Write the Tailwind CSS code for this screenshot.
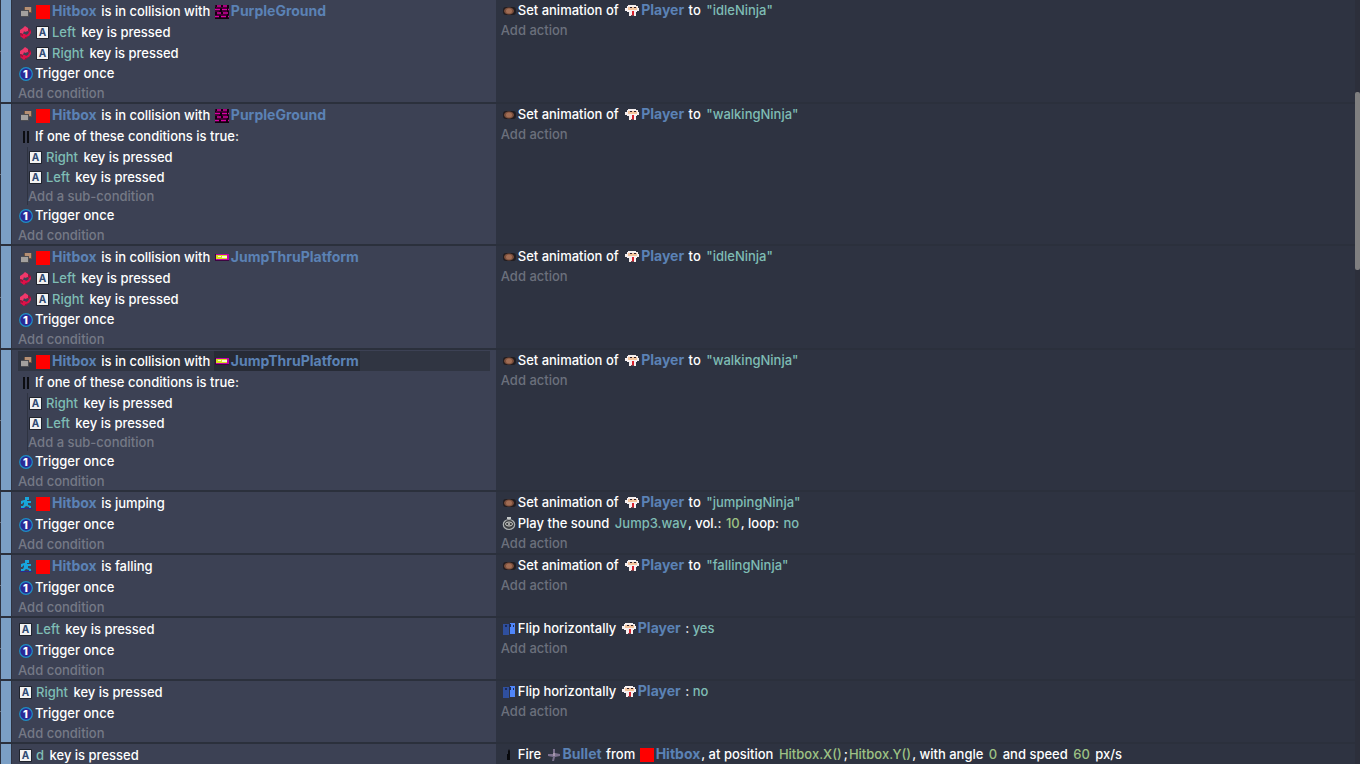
<!DOCTYPE html>
<html lang="en">

<head>
    <meta charset="UTF-8">
    <meta name="viewport" content="width=device-width, initial-scale=1.0">
    <script src="https://cdn.jsdelivr.net/npm/@tailwindcss/browser@4"></script>
    <title>Events</title>
</head>

<body class="h-screen overflow-hidden bg-[#2e3341] font-['Inter',sans-serif] text-[13px]/5 font-medium text-white">
    <!-- icons -->
    <svg class="hidden">
        <symbol id="collision" viewBox="0 0 16 16">
            <rect x="6" y="3" width="8" height="6" fill="#66503f" />
            <rect x="7" y="3" width="6" height="5" fill="#b58f74" />
            <rect x="3" y="6" width="8" height="7" fill="#4d4d52" />
            <rect x="3" y="7" width="7" height="5" fill="#a3a09e" />
        </symbol>
        <symbol id="invert" viewBox="0 0 16 16">
            <path d="M2 8V5l3-2 2-2 3 2v3L7 7 6 6 5 9z" fill="#f0386b" />
            <path d="M13 5v3l-2 3-3 1-2 2-4-3 2-2 3 0 1 1 2-1 1-2-1-1z" fill="#e01048" />
            <path d="m2 8 3 1v2l-3-1zM10 3l3 2-1 2-2-1zM7 12h3l-3 2z" fill="#a0103c" />
        </symbol>
        <symbol id="key" viewBox="0 0 16 16">
            <rect x="1" y="1" width="13" height="13" rx="1" fill="#20242e" />
            <rect x="2" y="2" width="11" height="11" fill="#f2f2f2" />
            <text x="7.5" y="11" text-anchor="middle" font-family="Inter" font-weight="700" font-size="10" fill="#2f4a72">A</text>
        </symbol>
        <symbol id="once" viewBox="0 0 16 16">
            <circle cx="8" cy="8" r="6.3" fill="#2a2a96" stroke="#1e8fc4" stroke-width="1.2" />
            <text x="7.5" y="12" text-anchor="middle" font-family="Inter" font-weight="800" font-size="11" fill="#fff">1</text>
        </symbol>
        <symbol id="or" viewBox="0 0 16 16">
            <rect x="5" y="2" width="2" height="12" fill="#0c0d11" />
            <rect x="9" y="2" width="2" height="12" fill="#0c0d11" />
        </symbol>
        <symbol id="runner" viewBox="0 0 16 16">
            <rect x="2" y="12" width="12" height="1" fill="#2c2a8c" />
            <path d="M7 1h4v3H9v1h4v2h-3v2l3 1v2h-2v-1l-3-1-2 2H3v-2h2l1-2V6L4 8H3V5l3-1h1z" fill="#18a5dc" />
        </symbol>
        <symbol id="square" viewBox="0 0 16 16">
            <rect x="1" y="1" width="14" height="14" fill="#f00" />
        </symbol>
        <symbol id="bricks" viewBox="0 0 16 16">
            <rect x="1" y="1" width="14" height="14" fill="#14000f" />
            <path d="M3 2h4M9 2h4M1 5.500h5M8 5.500h5M14 5.500h1M3 9h4M9 9h5M1 12.500h4M7 12.500h5M14 12.500h1" stroke="#dc00a6" stroke-width="1.500" />
            <path d="M1 2h1M2 3.700h11M1 7.200h4M8 7.200h5M3 10.800h10" stroke="#5c0045" stroke-width="1" />
        </symbol>
        <symbol id="platform" viewBox="0 0 16 16">
            <rect x="1" y="4" width="14" height="7" fill="#3c0640" />
            <rect x="2" y="4" width="13" height="6" fill="#c000a8" />
            <rect x="2" y="5" width="11" height="4" fill="#d2e21c" />
            <path d="M4 6h3v1H4zM8 6h5v2H8z" fill="#fff6d0" />
        </symbol>
        <symbol id="animation" viewBox="0 0 16 16">
            <rect x="2" y="4" width="13" height="8" rx="3" fill="#221d20" />
            <ellipse cx="8" cy="8" rx="5" ry="3.500" fill="#7b4f3c" />
            <ellipse cx="8" cy="8" rx="3" ry="2.500" fill="#a06d55" />
        </symbol>
        <symbol id="ninja" viewBox="0 0 16 16">
            <path d="M3 3h1V2h8v1h2v2h1v3h-2v1h-1v4H5V9H3V8H1V5h2z" fill="#f6f0f0" />
            <rect x="4" y="4" width="9" height="3" fill="#f3c49c" />
            <path d="M6 4h2v1H6zM10 4h2v1h-2z" fill="#30202a" />
            <path d="M8 8h2v4H8z" fill="#d8202c" />
            <path d="M7 12h3v1H7z" fill="#7c4148" />
        </symbol>
        <symbol id="sound" viewBox="0 0 16 16">
            <ellipse cx="8" cy="8.500" rx="5.700" ry="5" fill="#3e4144" stroke="#aeb2b2" stroke-width="1.2" />
            <ellipse cx="8" cy="8" rx="3.500" ry="2" fill="#3a3d40" stroke="#d0d0cc" />
            <circle cx="8" cy="8" r="1" fill="#c8c8c4" />
            <path d="M6 1h4v2H6z" fill="#c4c8c8" />
        </symbol>
        <symbol id="flip" viewBox="0 0 16 16">
            <path d="M2 3h6v11H2z" fill="#2f4f9e" />
            <path d="M9 2h5v11H9z" fill="#4f86fa" />
            <path d="M4 4h2v2H4zM8 3h2v3H8zM12 4h1v2h-1z" fill="#1b2a58" />
        </symbol>
        <symbol id="fire" viewBox="0 0 16 16">
            <path d="M8 2l1 2v9H6V7h1V4z" fill="#08090c" />
        </symbol>
        <symbol id="shuriken" viewBox="0 0 16 16">
            <path d="M7 2h2v4l5 1v2l-5 1-1 4H6l1-4-5-1V7h5z" fill="#7a708e" />
            <path d="M7 6h2v3H7z" fill="#a496ac" />
        </symbol>
    </svg>

    <div class="flex h-full">
        <main class="min-w-0 flex-1">
            <section class="flex gap-px border-b-2 border-[#2b303c]">
                <div class="flex w-[11px] items-center bg-[linear-gradient(to_right,#2e3341_1px,#7b9fc5_1px)]"><i class="h-px w-px bg-[#6f7684]"></i></div>
                <div class="w-[35.7%] bg-[#3c4154] px-1.5 pt-px">
                    <p class="mb-px flex h-5 items-center whitespace-pre"><svg class="mt-0.5 mr-px size-4"><use href="#collision" /></svg><svg class="mt-0.5 size-4"><use href="#square" /></svg><b class="mx-px text-sm font-bold text-[#5b82b5]">Hitbox</b> is in collision with <svg class="mt-0.5 size-4"><use href="#bricks" /></svg><b class="mx-px text-sm font-bold text-[#5b82b5]">PurpleGround</b></p>
                    <p class="mb-px flex h-5 items-center whitespace-pre"><svg class="mt-0.5 mr-px size-4"><use href="#invert" /></svg><svg class="mt-0.5 size-4"><use href="#key" /></svg><span class="ml-px mr-0.5 text-[#7fbdb5]">Left</span> key is pressed</p>
                    <p class="flex h-5 items-center whitespace-pre"><svg class="mt-0.5 mr-px size-4"><use href="#invert" /></svg><svg class="mt-0.5 size-4"><use href="#key" /></svg><span class="ml-px mr-0.5 text-[#7fbdb5]">Right</span> key is pressed</p>
                    <p class="mb-px flex h-5 items-center whitespace-pre"><svg class="mt-0.5 mr-px size-4"><use href="#once" /></svg>Trigger once</p>
                    <button class="flex h-[18px] items-center text-[#757986]">Add condition</button>
                </div>
                <div class="flex-1 pl-1">
                    <p class="mb-px flex h-5 items-center whitespace-pre"><svg class="mt-0.5 mr-px size-4"><use href="#animation" /></svg>Set animation of <svg class="mt-0.5 ml-0.5 size-4"><use href="#ninja" /></svg><b class="mx-px text-sm font-bold text-[#5b82b5]">Player</b> to <span class="mx-0.5 text-[#7fbdb5]">"idleNinja"</span></p>
                    <button class="flex h-[18px] items-center text-[#6b707c]">Add action</button>
                </div>
            </section>

            <section class="flex gap-px border-b-2 border-[#2b303c]">
                <div class="flex w-[11px] items-center bg-[linear-gradient(to_right,#2e3341_1px,#7b9fc5_1px)]"><i class="h-px w-px bg-[#6f7684]"></i></div>
                <div class="w-[35.7%] bg-[#3c4154] px-1.5 pt-px">
                    <p class="mb-px flex h-5 items-center whitespace-pre"><svg class="mt-0.5 mr-px size-4"><use href="#collision" /></svg><svg class="mt-0.5 size-4"><use href="#square" /></svg><b class="mx-px text-sm font-bold text-[#5b82b5]">Hitbox</b> is in collision with <svg class="mt-0.5 size-4"><use href="#bricks" /></svg><b class="mx-px text-sm font-bold text-[#5b82b5]">PurpleGround</b></p>
                    <p class="mb-px flex h-5 items-center whitespace-pre"><svg class="mt-0.5 mr-px size-4"><use href="#or" /></svg>If one of these conditions is true:</p>
                    <div class="ml-[9px] border-l border-[#2e3341]">
                        <p class="flex h-5 items-center whitespace-pre"><svg class="mt-0.5 size-4"><use href="#key" /></svg><span class="mx-0.5 text-[#7fbdb5]">Right</span> key is pressed</p>
                        <p class="flex h-5 items-center whitespace-pre"><svg class="mt-0.5 size-4"><use href="#key" /></svg><span class="mx-0.5 text-[#7fbdb5]">Left</span> key is pressed</p>
                        <button class="flex h-[18px] items-center text-[#757986]">Add a sub-condition</button>
                    </div>
                    <p class="mb-px flex h-5 items-center whitespace-pre"><svg class="mt-0.5 mr-px size-4"><use href="#once" /></svg>Trigger once</p>
                    <button class="flex h-[18px] items-center text-[#757986]">Add condition</button>
                </div>
                <div class="flex-1 pl-1">
                    <p class="mb-px flex h-5 items-center whitespace-pre"><svg class="mt-0.5 mr-px size-4"><use href="#animation" /></svg>Set animation of <svg class="mt-0.5 ml-0.5 size-4"><use href="#ninja" /></svg><b class="mx-px text-sm font-bold text-[#5b82b5]">Player</b> to <span class="mx-0.5 text-[#7fbdb5]">"walkingNinja"</span></p>
                    <button class="flex h-[18px] items-center text-[#6b707c]">Add action</button>
                </div>
            </section>

            <section class="flex gap-px border-b-2 border-[#2b303c]">
                <div class="flex w-[11px] items-center bg-[linear-gradient(to_right,#2e3341_1px,#7b9fc5_1px)]"><i class="h-px w-px bg-[#6f7684]"></i></div>
                <div class="w-[35.7%] bg-[#3c4154] px-1.5 pt-px">
                    <p class="mb-px flex h-5 items-center whitespace-pre"><svg class="mt-0.5 mr-px size-4"><use href="#collision" /></svg><svg class="mt-0.5 size-4"><use href="#square" /></svg><b class="mx-px text-sm font-bold text-[#5b82b5]">Hitbox</b> is in collision with <svg class="mt-0.5 size-4"><use href="#platform" /></svg><b class="mx-px text-sm font-bold text-[#5b82b5]">JumpThruPlatform</b></p>
                    <p class="mb-px flex h-5 items-center whitespace-pre"><svg class="mt-0.5 mr-px size-4"><use href="#invert" /></svg><svg class="mt-0.5 size-4"><use href="#key" /></svg><span class="ml-px mr-0.5 text-[#7fbdb5]">Left</span> key is pressed</p>
                    <p class="flex h-5 items-center whitespace-pre"><svg class="mt-0.5 mr-px size-4"><use href="#invert" /></svg><svg class="mt-0.5 size-4"><use href="#key" /></svg><span class="ml-px mr-0.5 text-[#7fbdb5]">Right</span> key is pressed</p>
                    <p class="mb-px flex h-5 items-center whitespace-pre"><svg class="mt-0.5 mr-px size-4"><use href="#once" /></svg>Trigger once</p>
                    <button class="flex h-[18px] items-center text-[#757986]">Add condition</button>
                </div>
                <div class="flex-1 pl-1">
                    <p class="mb-px flex h-5 items-center whitespace-pre"><svg class="mt-0.5 mr-px size-4"><use href="#animation" /></svg>Set animation of <svg class="mt-0.5 ml-0.5 size-4"><use href="#ninja" /></svg><b class="mx-px text-sm font-bold text-[#5b82b5]">Player</b> to <span class="mx-0.5 text-[#7fbdb5]">"idleNinja"</span></p>
                    <button class="flex h-[18px] items-center text-[#6b707c]">Add action</button>
                </div>
            </section>

            <section class="flex gap-px border-b-2 border-[#2b303c]">
                <div class="flex w-[11px] items-center bg-[linear-gradient(to_right,#2e3341_1px,#7b9fc5_1px)]"><i class="h-px w-px bg-[#6f7684]"></i></div>
                <div class="w-[35.7%] bg-[#3c4154] px-1.5 pt-px">
                    <!-- hovered condition -->
                    <p class="mb-px flex h-5 items-center whitespace-pre bg-[#303542]"><svg class="mt-0.5 mr-px size-4"><use href="#collision" /></svg><svg class="mt-0.5 size-4"><use href="#square" /></svg><b class="mx-px text-sm font-bold text-[#5b82b5]">Hitbox</b> is in collision with <span class="flex h-5 items-center bg-[#272b36]"><svg class="mt-0.5 size-4"><use href="#platform" /></svg><b class="mx-px text-sm font-bold text-[#5b82b5]">JumpThruPlatform</b></span></p>
                    <p class="mb-px flex h-5 items-center whitespace-pre"><svg class="mt-0.5 mr-px size-4"><use href="#or" /></svg>If one of these conditions is true:</p>
                    <div class="ml-[9px] border-l border-[#2e3341]">
                        <p class="flex h-5 items-center whitespace-pre"><svg class="mt-0.5 size-4"><use href="#key" /></svg><span class="mx-0.5 text-[#7fbdb5]">Right</span> key is pressed</p>
                        <p class="flex h-5 items-center whitespace-pre"><svg class="mt-0.5 size-4"><use href="#key" /></svg><span class="mx-0.5 text-[#7fbdb5]">Left</span> key is pressed</p>
                        <button class="flex h-[18px] items-center text-[#757986]">Add a sub-condition</button>
                    </div>
                    <p class="mb-px flex h-5 items-center whitespace-pre"><svg class="mt-0.5 mr-px size-4"><use href="#once" /></svg>Trigger once</p>
                    <button class="flex h-[18px] items-center text-[#757986]">Add condition</button>
                </div>
                <div class="flex-1 pl-1">
                    <p class="mb-px flex h-5 items-center whitespace-pre"><svg class="mt-0.5 mr-px size-4"><use href="#animation" /></svg>Set animation of <svg class="mt-0.5 ml-0.5 size-4"><use href="#ninja" /></svg><b class="mx-px text-sm font-bold text-[#5b82b5]">Player</b> to <span class="mx-0.5 text-[#7fbdb5]">"walkingNinja"</span></p>
                    <button class="flex h-[18px] items-center text-[#6b707c]">Add action</button>
                </div>
            </section>

            <section class="flex gap-px border-b-2 border-[#2b303c]">
                <div class="flex w-[11px] items-center bg-[linear-gradient(to_right,#2e3341_1px,#7b9fc5_1px)]"><i class="h-px w-px bg-[#6f7684]"></i></div>
                <div class="w-[35.7%] bg-[#3c4154] px-1.5 pt-px">
                    <p class="mb-px flex h-5 items-center whitespace-pre"><svg class="mt-0.5 mr-px size-4"><use href="#runner" /></svg><svg class="mt-0.5 size-4"><use href="#square" /></svg><b class="mx-px text-sm font-bold text-[#5b82b5]">Hitbox</b> is jumping</p>
                    <p class="mb-px flex h-5 items-center whitespace-pre"><svg class="mt-0.5 mr-px size-4"><use href="#once" /></svg>Trigger once</p>
                    <button class="flex h-[18px] items-center text-[#757986]">Add condition</button>
                </div>
                <div class="flex-1 pl-1">
                    <p class="mb-px flex h-5 items-center whitespace-pre"><svg class="mt-0.5 mr-px size-4"><use href="#animation" /></svg>Set animation of <svg class="mt-0.5 ml-0.5 size-4"><use href="#ninja" /></svg><b class="mx-px text-sm font-bold text-[#5b82b5]">Player</b> to <span class="mx-0.5 text-[#7fbdb5]">"jumpingNinja"</span></p>
                    <p class="mb-px flex h-5 items-center whitespace-pre"><svg class="mt-0.5 mr-px size-4"><use href="#sound" /></svg>Play the sound <span class="ml-0.5 mr-px text-[#7fbdb5]">Jump3.wav</span>, vol.: <span class="mx-px text-[#9dc284]">10</span>, loop: <span class="mx-px text-[#7fbdb5]">no</span></p>
                    <button class="flex h-[18px] items-center text-[#6b707c]">Add action</button>
                </div>
            </section>

            <section class="flex gap-px border-b-2 border-[#2b303c]">
                <div class="flex w-[11px] items-center bg-[linear-gradient(to_right,#2e3341_1px,#7b9fc5_1px)]"><i class="h-px w-px bg-[#6f7684]"></i></div>
                <div class="w-[35.7%] bg-[#3c4154] px-1.5 pt-px">
                    <p class="mb-px flex h-5 items-center whitespace-pre"><svg class="mt-0.5 mr-px size-4"><use href="#runner" /></svg><svg class="mt-0.5 size-4"><use href="#square" /></svg><b class="mx-px text-sm font-bold text-[#5b82b5]">Hitbox</b> is falling</p>
                    <p class="mb-px flex h-5 items-center whitespace-pre"><svg class="mt-0.5 mr-px size-4"><use href="#once" /></svg>Trigger once</p>
                    <button class="flex h-[18px] items-center text-[#757986]">Add condition</button>
                </div>
                <div class="flex-1 pl-1">
                    <p class="mb-px flex h-5 items-center whitespace-pre"><svg class="mt-0.5 mr-px size-4"><use href="#animation" /></svg>Set animation of <svg class="mt-0.5 ml-0.5 size-4"><use href="#ninja" /></svg><b class="mx-px text-sm font-bold text-[#5b82b5]">Player</b> to <span class="mx-0.5 text-[#7fbdb5]">"fallingNinja"</span></p>
                    <button class="flex h-[18px] items-center text-[#6b707c]">Add action</button>
                </div>
            </section>

            <section class="flex gap-px border-b-2 border-[#2b303c]">
                <div class="flex w-[11px] items-center bg-[linear-gradient(to_right,#2e3341_1px,#7b9fc5_1px)]"><i class="h-px w-px bg-[#6f7684]"></i></div>
                <div class="w-[35.7%] bg-[#3c4154] px-1.5 pt-px">
                    <p class="mb-px flex h-5 items-center whitespace-pre"><svg class="mt-0.5 size-4"><use href="#key" /></svg><span class="mx-0.5 text-[#7fbdb5]">Left</span> key is pressed</p>
                    <p class="mb-px flex h-5 items-center whitespace-pre"><svg class="mt-0.5 mr-px size-4"><use href="#once" /></svg>Trigger once</p>
                    <button class="flex h-[18px] items-center text-[#757986]">Add condition</button>
                </div>
                <div class="flex-1 pl-1">
                    <p class="mb-px flex h-5 items-center whitespace-pre"><svg class="mt-0.5 mr-px size-4"><use href="#flip" /></svg>Flip horizontally <svg class="mt-0.5 ml-px size-4"><use href="#ninja" /></svg><b class="mx-px text-sm font-bold text-[#5b82b5]">Player</b> : <span class="text-[#7fbdb5]">yes</span></p>
                    <button class="flex h-[18px] items-center text-[#6b707c]">Add action</button>
                </div>
            </section>

            <section class="flex gap-px border-b-2 border-[#2b303c]">
                <div class="flex w-[11px] items-center bg-[linear-gradient(to_right,#2e3341_1px,#7b9fc5_1px)]"><i class="h-px w-px bg-[#6f7684]"></i></div>
                <div class="w-[35.7%] bg-[#3c4154] px-1.5 pt-px">
                    <p class="mb-px flex h-5 items-center whitespace-pre"><svg class="mt-0.5 size-4"><use href="#key" /></svg><span class="mx-0.5 text-[#7fbdb5]">Right</span> key is pressed</p>
                    <p class="mb-px flex h-5 items-center whitespace-pre"><svg class="mt-0.5 mr-px size-4"><use href="#once" /></svg>Trigger once</p>
                    <button class="flex h-[18px] items-center text-[#757986]">Add condition</button>
                </div>
                <div class="flex-1 pl-1">
                    <p class="mb-px flex h-5 items-center whitespace-pre"><svg class="mt-0.5 mr-px size-4"><use href="#flip" /></svg>Flip horizontally <svg class="mt-0.5 ml-px size-4"><use href="#ninja" /></svg><b class="mx-px text-sm font-bold text-[#5b82b5]">Player</b> : <span class="text-[#7fbdb5]">no</span></p>
                    <button class="flex h-[18px] items-center text-[#6b707c]">Add action</button>
                </div>
            </section>

            <section class="flex gap-px">
                <div class="w-[11px] bg-[linear-gradient(to_right,#2e3341_1px,#7b9fc5_1px)]"></div>
                <div class="w-[35.7%] bg-[#3c4154] px-1.5 pt-px">
                    <p class="mb-px flex h-5 items-center whitespace-pre"><svg class="mt-0.5 size-4"><use href="#key" /></svg><span class="mx-0.5 text-[#7fbdb5]">d</span> key is pressed</p>
                </div>
                <div class="flex-1 pl-1">
                    <p class="mb-px flex h-5 items-center whitespace-pre"><svg class="mt-0.5 mr-px size-4"><use href="#fire" /></svg>Fire <svg class="mt-0.5 ml-px size-4"><use href="#shuriken" /></svg><b class="mx-px text-sm font-bold text-[#5b82b5]">Bullet</b> from <svg class="mt-0.5 size-4"><use href="#square" /></svg><b class="mx-px text-sm font-bold text-[#5b82b5]">Hitbox</b>, at position <span class="mx-0.5 text-[#9dc284]">Hitbox.X()</span>;<span class="mx-px text-[#9dc284]">Hitbox.Y()</span>, with angle <span class="mx-0.5 text-[#9dc284]">0</span> and speed <span class="mx-0.5 text-[#9dc284]">60</span> px/s</p>
                </div>
            </section>
        </main>

        <!-- scrollbar -->
        <div class="w-[5px] bg-[#2c2f3b] pt-[92px]">
            <div class="h-[178px] rounded-xs bg-[#7f7f80]"></div>
        </div>
    </div>
</body>

</html>
